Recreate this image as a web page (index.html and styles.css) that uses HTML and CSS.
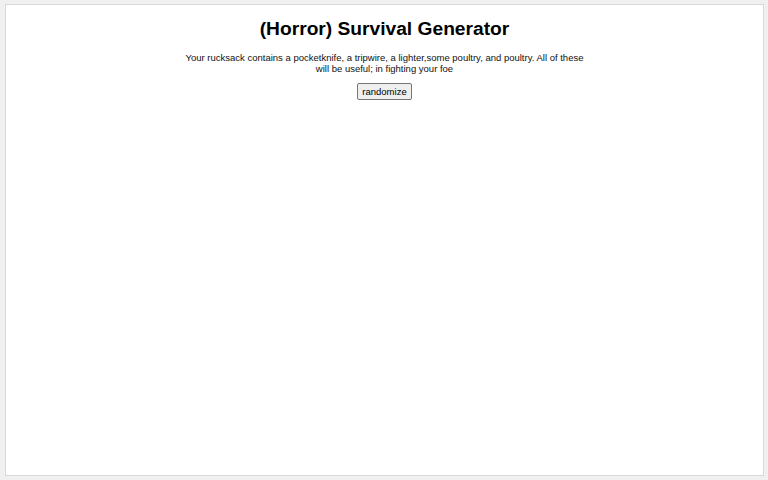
FILE: index.html
```html
<!DOCTYPE html>
<html>
<head>
<meta charset="utf-8">
<link rel="stylesheet" href="styles.css">
</head>
<body>
<main class="card">
  <h1 class="title">(Horror) Survival Generator</h1>
  <p class="story">Your rucksack contains a pocketknife, a tripwire, a lighter,some poultry, and poultry. All of these will be useful; in fighting your foe</p>
  <button class="btn">randomize</button>
</main>
</body>
</html>
```
FILE: styles.css
```css
html, body { margin: 0; padding: 0; }
body {
  background: #f0f0f0;
  font-family: "Liberation Sans", Arial, sans-serif;
  padding: 4px 4px 4px 5px;
  height: 480px;
  box-sizing: border-box;
}
.card {
  background: #fff;
  border: 1px solid #d8d8d8;
  height: 472px;
  box-sizing: border-box;
  display: flex;
  flex-direction: column;
  align-items: center;
  padding-top: 13px;
}
.title {
  font-size: 19.2px;
  line-height: 22px;
  font-weight: bold;
  margin: 0 0 12px;
  color: #000;
}
.story {
  font-size: 9.5px;
  line-height: 11px;
  width: 406px;
  text-align: center;
  margin: 0 0 9px;
  color: #111;
}
.btn {
  font-family: "Liberation Sans", Arial, sans-serif;
  font-size: 9.5px;
  padding: 2px 4px;
  background: #efefef;
  border: 1px solid #767676;
  border-radius: 2px;
  color: #000;
}
```
